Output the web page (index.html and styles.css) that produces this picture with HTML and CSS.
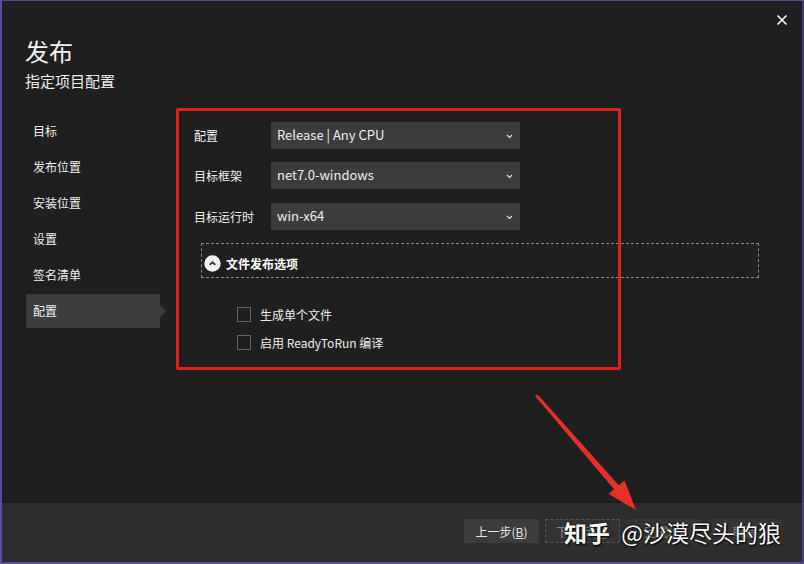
FILE: index.html
```html
<!DOCTYPE html>
<html lang="zh-CN">
<head>
<meta charset="utf-8">
<title>发布</title>
<link rel="stylesheet" href="styles.css">
</head>
<body>
<div class="window">
  <div class="main">
    <button class="close" aria-label="关闭">
      <svg width="12" height="12" viewBox="0 0 12 12"><path d="M1.5 1.5 L10.5 10.5 M10.5 1.5 L1.5 10.5" stroke="#ffffff" stroke-width="1.6" fill="none"/></svg>
    </button>
    <div class="header">
      <h1 class="title">发布</h1>
      <div class="subtitle">指定项目配置</div>
    </div>
    <div class="body">
      <ul class="nav">
        <li class="nav-item">目标</li>
        <li class="nav-item">发布位置</li>
        <li class="nav-item">安装位置</li>
        <li class="nav-item">设置</li>
        <li class="nav-item">签名清单</li>
        <li class="nav-item active">配置</li>
      </ul>
      <div class="content">
        <div class="form-row">
          <label class="label">配置</label>
          <div class="select"><span>Release | Any CPU</span><svg class="chev" width="7" height="5" viewBox="0 0 7 5"><path d="M1 1 L3.5 3.5 L6 1" stroke="#e0e0e0" stroke-width="1.2" fill="none"/></svg></div>
        </div>
        <div class="form-row">
          <label class="label">目标框架</label>
          <div class="select"><span>net7.0-windows</span><svg class="chev" width="7" height="5" viewBox="0 0 7 5"><path d="M1 1 L3.5 3.5 L6 1" stroke="#e0e0e0" stroke-width="1.2" fill="none"/></svg></div>
        </div>
        <div class="form-row">
          <label class="label">目标运行时</label>
          <div class="select"><span>win-x64</span><svg class="chev" width="7" height="5" viewBox="0 0 7 5"><path d="M1 1 L3.5 3.5 L6 1" stroke="#e0e0e0" stroke-width="1.2" fill="none"/></svg></div>
        </div>
        <div class="expander">
          <svg class="exp-icon" width="17" height="17" viewBox="0 0 17 17"><circle cx="8.5" cy="8.5" r="8.2" fill="#f2f2f2"/><path d="M5.8 9.8 L8.5 7.1 L11.2 9.8" stroke="#2a2a2a" stroke-width="1.7" fill="none"/></svg>
          <span class="exp-text">文件发布选项</span>
        </div>
        <div class="checks">
          <div class="check-row"><span class="box"></span><span>生成单个文件</span></div>
          <div class="check-row"><span class="box"></span><span>启用 ReadyToRun 编译</span></div>
        </div>
      </div>
    </div>
    <div class="highlight"></div>
    <svg class="arrow" width="804" height="564" viewBox="0 0 804 564">
      <polygon points="535.5,394.5 538.5,395.5 618.7,485.3 624.5,480.5 636,510 608.5,494 614.1,489.3 535.5,396.5" fill="#e8302a"/>
    </svg>
  </div>
  <div class="footer">
    <div class="buttons">
      <button class="btn">上一步(<u>B</u>)</button>
      <button class="btn focus">下一步(<u>N</u>)</button>
      <button class="btn">完成(<u>F</u>)</button>
      <button class="btn">取消</button>
    </div>
    <div class="watermark"><b>知乎</b> @沙漠尽头的狼</div>
  </div>
</div>
</body>
</html>
```
FILE: styles.css
```css
* { box-sizing: border-box; }
html, body { margin: 0; padding: 0; background: #1f1f1f; }
body {
  font-family: "Noto Sans CJK SC", "Noto Sans", sans-serif;
  color: #f0f0f0;
  font-size: 12px;
}
.window {
  width: 804px;
  height: 564px;
  border-top: 1px solid #5a4a9e;
  border-left: 2px solid #5a4a9e;
  border-right: 2px solid #4a3e86;
  border-bottom: 2px solid #5a4a9e;
  background: #1f1f1f;
  display: flex;
  flex-direction: column;
  overflow: hidden;
}
.main {
  position: relative;
  flex: 1;
  display: flex;
  flex-direction: column;
}
.close {
  position: absolute;
  top: 11px;
  right: 12px;
  width: 16px;
  height: 16px;
  padding: 0;
  border: 0;
  background: transparent;
  display: flex;
  align-items: center;
  justify-content: center;
}
.header {
  padding: 34px 0 0 23px;
}
.title {
  margin: 0;
  font-size: 24px;
  font-weight: 400;
  line-height: 32px;
  color: #f4f4f4;
}
.subtitle {
  margin-top: 4px;
  font-size: 15px;
  line-height: 20px;
  color: #eeeeee;
}
.body {
  margin-top: 23px;
  display: flex;
  padding-left: 24px;
}
.nav {
  list-style: none;
  margin: 0;
  padding: 0;
  width: 134px;
  display: flex;
  flex-direction: column;
  gap: 2px;
}
.nav-item {
  position: relative;
  height: 34px;
  line-height: 34px;
  padding-left: 7px;
  font-size: 12px;
  color: #f0f0f0;
}
.nav-item.active { background: #3c3c3c; }
.nav-item.active::after {
  content: "";
  position: absolute;
  right: -6px;
  top: 11px;
  border-left: 6px solid #3c3c3c;
  border-top: 6px solid transparent;
  border-bottom: 6px solid transparent;
}
.content {
  padding: 8px 0 0 34px;
  display: flex;
  flex-direction: column;
}
.form-row {
  display: flex;
  align-items: center;
  height: 27px;
  margin-bottom: 13px;
}
.form-row:nth-child(3) { margin-top: 1px; }
.label {
  width: 77px;
  font-size: 12px;
  color: #f0f0f0;
}
.select {
  width: 249px;
  height: 27px;
  background: #3c3c3c;
  display: flex;
  align-items: center;
  justify-content: space-between;
  padding: 0 7px 0 6px;
  font-size: 13px;
  color: #f0f0f0;
}
.select span { margin-top: -3px; }
.chev { margin-top: 1px; }
.expander {
  margin-left: 7px;
  width: 558px;
  height: 35px;
  border: 1px dashed #8a8a8a;
  display: flex;
  align-items: center;
  gap: 5px;
  padding-left: 2px;
  padding-top: 5px;
}
.exp-text {
  font-weight: 700;
  font-size: 12px;
  color: #ffffff;
}
.checks {
  margin: 22px 0 0 43px;
  display: flex;
  flex-direction: column;
}
.check-row {
  height: 28px;
  display: flex;
  align-items: center;
  gap: 9px;
  font-size: 12px;
  color: #eeeeee;
}
.box {
  width: 14px;
  height: 15px;
  border: 1px solid #666666;
  background: #1f1f1f;
}
.highlight {
  position: absolute;
  left: 174px;
  top: 107px;
  width: 445px;
  height: 262px;
  border: 3px solid #e3221e;
  border-radius: 2px;
  pointer-events: none;
}
.arrow {
  position: absolute;
  left: -2px;
  top: -1px;
  pointer-events: none;
  z-index: 3;
}
.footer {
  position: relative;
  height: 60px;
  background: #2d2d2d;
  border-top: 1px solid #1a1a1a;
  display: flex;
  justify-content: flex-end;
  padding: 16px 20px 0 0;
}
.buttons {
  display: flex;
  gap: 6px;
  height: 24px;
}
.btn {
  width: 75px;
  height: 24px;
  border: 1px solid #3c3c3c;
  background: #3c3c3c;
  color: #e8e8e8;
  font-family: "Noto Sans CJK SC", sans-serif;
  font-size: 12px;
  padding: 0;
}
.btn.focus {
  background: #333333;
  border: 1px dashed #555555;
  color: #8a8a8a;
}
.btn:nth-child(3), .btn:nth-child(4) {
  background: #353535;
  border-color: #353535;
  color: #8a8a8a;
}
.watermark {
  position: absolute;
  left: 562px;
  top: 10px;
  font-size: 23px;
  line-height: 38px;
  color: #ffffff;
  white-space: nowrap;
  text-shadow: 0 0 2px #000, 1px 1px 2px #000;
  z-index: 2;
}
.watermark b { font-weight: 700; margin-right: 6px; }
```
